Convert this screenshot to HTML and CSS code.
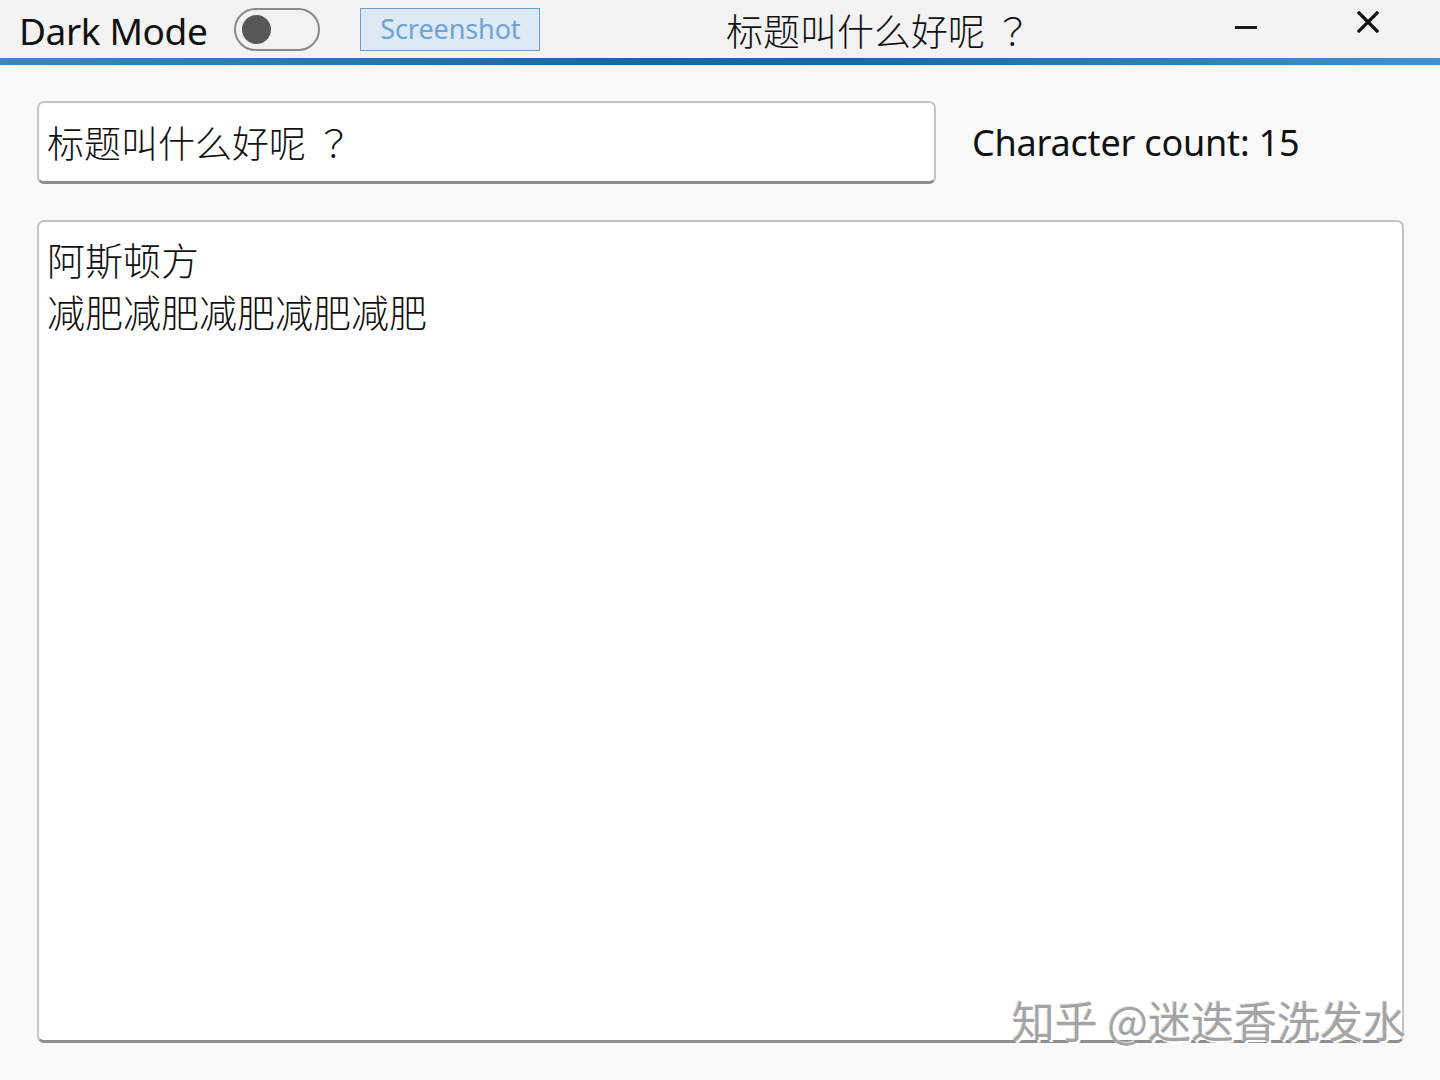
FILE: index.html
```html
<!DOCTYPE html>
<html lang="zh-CN">
<head>
<meta charset="utf-8">
<title>标题叫什么好呢？</title>
<link rel="stylesheet" href="styles.css">
</head>
<body>
<div class="window">
  <header class="titlebar">
    <div class="tb-left">
      <span class="dark-label">Dark Mode</span>
      <span class="toggle"><span class="knob"></span></span>
      <span class="shot-btn">Screenshot</span>
    </div>
    <div class="tb-title">标题叫什么好呢<span class="fwq">？</span></div>
    <div class="tb-controls">
      <span class="ctl ctl-min"><svg width="24" height="4" viewBox="0 0 24 4"><rect x="0" y="0" width="22" height="3" fill="#1a1a1a"/></svg></span>
      <span class="ctl ctl-close"><svg width="22" height="22" viewBox="0 0 22 22"><path d="M2 2 L20 20 M20 2 L2 20" stroke="#111" stroke-width="3.2" stroke-linecap="square"/></svg></span>
    </div>
  </header>
  <div class="accent"></div>
  <main class="content">
    <div class="row">
      <div class="field title-field">标题叫什么好呢<span class="fwq">？</span></div>
      <div class="count">Character count: 15</div>
    </div>
    <div class="field body-field">
      <div class="line">阿斯顿方</div>
      <div class="line">减肥减肥减肥减肥减肥</div>
      <div class="watermark">知乎 @迷迭香洗发水</div>
    </div>
  </main>
</div>
</body>
</html>
```
FILE: styles.css
```css
html, body {
  margin: 0;
  padding: 0;
}
body {
  width: 1440px;
  height: 1080px;
  overflow: hidden;
  background: #f9f9f9;
  font-family: "Noto Sans", "Noto Sans CJK SC", sans-serif;
  color: #111;
  text-spacing-trim: space-all;
}
.window {
  display: flex;
  flex-direction: column;
  height: 1080px;
}
.titlebar {
  height: 58px;
  background: #f2f2f2;
  display: flex;
  align-items: center;
  position: relative;
}
.tb-left {
  display: flex;
  align-items: center;
  padding-left: 19px;
}
.dark-label {
  font-size: 37px;
  line-height: 40px;
  color: #111;
  letter-spacing: -0.4px;
  margin-top: 4px;
}
.toggle {
  width: 82px;
  height: 39px;
  border: 2px solid #8a8a8a;
  border-radius: 22px;
  margin-left: 27px;
  display: flex;
  align-items: center;
  box-sizing: content-box;
}
.knob {
  width: 29px;
  height: 29px;
  border-radius: 50%;
  background: #575757;
  margin-left: 6px;
}
.shot-btn {
  margin-left: 40px;
  width: 180px;
  height: 43px;
  box-sizing: border-box;
  border: 1.5px solid #6b9fce;
  background: #dde9f4;
  color: #6fa3d4;
  font-size: 27px;
  display: flex;
  align-items: center;
  justify-content: center;
  line-height: 1;
  padding-bottom: 2px;
  letter-spacing: -0.1px;
}
.fwq {
  display: inline-block;
  width: 1em;
  padding-left: 0.25em;
  text-align: center;
  font-family: "Noto Sans CJK JP", "Noto Sans CJK SC", sans-serif;
  text-spacing-trim: space-all;
}
.tb-title {
  position: absolute;
  left: 726px;
  top: 8px;
  font-size: 37px;
  line-height: 44px;
  font-family: "Noto Sans CJK SC", sans-serif;
  font-weight: 300;
  color: #111;
}
.tb-controls {
  margin-left: auto;
  display: flex;
  align-items: flex-start;
  height: 58px;
  padding-right: 61px;
}
.ctl {
  display: block;
}
.ctl svg {
  display: block;
}
.ctl-min {
  margin-top: 26px;
}
.ctl-close {
  margin-top: 11px;
  margin-left: 98px;
}
.accent {
  height: 7px;
  background: linear-gradient(to right, #3b86c8 0%, #1664b0 45%, #1a67b2 60%, #4390cf 100%);
  box-shadow: 0 1px 0 #dfeaf5;
}
.content {
  flex: 1;
  padding: 36px 37px 37px 37px;
  display: flex;
  flex-direction: column;
  gap: 36px;
}
.row {
  display: flex;
  align-items: center;
}
.field {
  background: #ffffff;
  border: 2px solid #c4c4c4;
  border-bottom: 3px solid #8e8e8e;
  border-radius: 7px;
  box-sizing: border-box;
  font-family: "Noto Sans CJK SC", sans-serif;
  font-weight: 300;
  color: #111;
}
.title-field {
  width: 899px;
  height: 83px;
  font-size: 37px;
  line-height: 44px;
  padding: 17px 8px 0;
}
.count {
  margin-left: 36px;
  font-size: 36px;
  line-height: 44px;
  color: #111;
  letter-spacing: -0.2px;
}
.body-field {
  width: 1367px;
  flex: 1;
  padding: 11px 8px 0;
  font-size: 38px;
  line-height: 52px;
  position: relative;
}
.watermark {
  position: absolute;
  right: -4px;
  bottom: -4px;
  font-size: 43px;
  line-height: 50px;
  color: #a4a4a4;
  font-weight: 400;
  letter-spacing: 0;
  text-shadow: 2px 2px 0 #ffffff, -1px -1px 0 #e4e4e4;
}
```
